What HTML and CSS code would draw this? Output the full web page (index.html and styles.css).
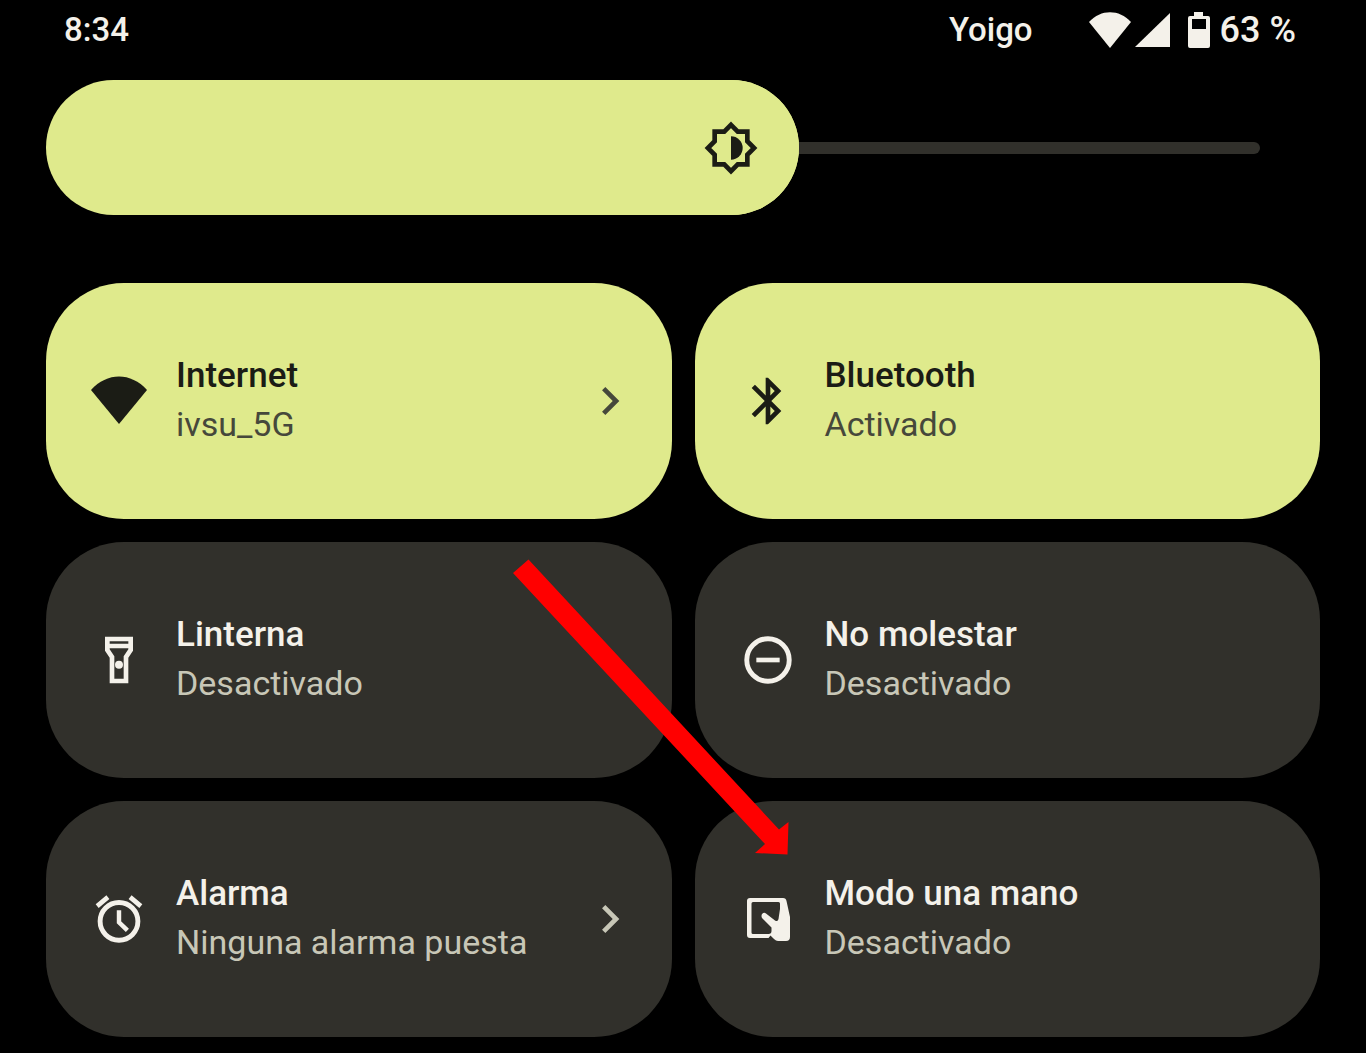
FILE: index.html
```html
<!DOCTYPE html>
<html lang="es">
<head>
<meta charset="UTF-8">
<meta name="viewport" content="width=device-width, initial-scale=1.0">
<title>Ajustes rápidos</title>
<link rel="stylesheet" href="styles.css">
</head>
<body>
<div class="panel">
  <!-- Barra de estado -->
  <header class="status-bar">
    <span class="clock">8:34</span>
    <span class="carrier">Yoigo</span>
    <svg class="status-wifi" viewBox="0 0 42 36"><path d="M0 10C12-3 30-3 42 10L21 36z"/></svg>
    <svg class="status-signal" viewBox="0 0 35 36"><path d="M35 1v34H0z"/></svg>
    <svg class="status-battery" viewBox="0 0 22 36"><path fill-rule="evenodd" d="M6 0h9v4h5q2 0 2 2v28q0 2-2 2H2q-2 0-2-2V6q0-2 2-2h4zM4 7v10h14V7z"/></svg>
    <span class="battery-level">63 %</span>
  </header>

  <!-- Brillo -->
  <div class="brightness">
    <input type="range" class="brightness-input" id="brightness" min="0" max="255" value="146" aria-label="Brillo">
    <div class="brightness-fill" id="brightness-fill" style="--level: 0.5725">
      <svg class="icon" viewBox="0 0 24 24">
        <path fill="none" stroke="currentColor" stroke-width="2" d="M12 2.1L14.9 5H19v4.1l2.9 2.9-2.9 2.9V19h-4.1L12 21.9 9.1 19H5v-4.1L2.1 12 5 9.1V5h4.1z"/>
        <path d="M12 7a5 5 0 0 1 0 10z"/>
      </svg>
    </div>
  </div>

  <!-- Botones -->
  <main class="tiles">
    <button type="button" class="tile active" aria-pressed="true">
      <svg class="icon" viewBox="0 0 56 56"><path d="M0 17C16-1 40-1 56 17L28 51z"/></svg>
      <span class="label">
        <span class="name">Internet</span>
        <span class="state">ivsu_5G</span>
      </span>
      <svg class="icon chevron" viewBox="0 0 24 24"><path d="M10 6L8.590 7.410 13.170 12l-4.580 4.590L10 18l6-6z"/></svg>
    </button>

    <button type="button" class="tile active" aria-pressed="true">
      <svg class="icon" viewBox="0 0 24 24"><path d="M17.710 7.710L12 2h-1v7.590L6.410 5 5 6.410 10.590 12 5 17.590 6.410 19 11 14.410V22h1l5.710-5.710-4.300-4.290 4.300-4.290zM13 5.830l1.880 1.880L13 9.590V5.830zm1.880 10.460L13 18.170v-3.760l1.880 1.880z"/></svg>
      <span class="label">
        <span class="name">Bluetooth</span>
        <span class="state">Activado</span>
      </span>
    </button>

    <button type="button" class="tile" aria-pressed="false">
      <svg class="icon" viewBox="0 0 24 24">
        <path fill-rule="evenodd" d="M18 2H6v6l2 3v11h8V11l2-3zM16 4v1H8V4zM14 10.400V20h-4v-9.600l-2-3V7h8v.400z"/>
        <circle cx="12" cy="14" r="1.700"/>
      </svg>
      <span class="label">
        <span class="name">Linterna</span>
        <span class="state">Desactivado</span>
      </span>
    </button>

    <button type="button" class="tile" aria-pressed="false">
      <svg class="icon" viewBox="0 0 24 24">
        <circle cx="12" cy="12" r="9.100" fill="none" stroke="currentColor" stroke-width="2.100"/>
        <path d="M7 11h10v2H7z"/>
      </svg>
      <span class="label">
        <span class="name">No molestar</span>
        <span class="state">Desactivado</span>
      </span>
    </button>

    <button type="button" class="tile">
      <svg class="icon" viewBox="0 0 24 24">
        <path d="M22 5.720l-4.600-3.860-1.290 1.530 4.600 3.860zM7.880 3.390L6.600 1.860 2 5.710l1.290 1.530z"/>
        <circle cx="12" cy="13" r="8.100" fill="none" stroke="currentColor" stroke-width="2.100"/>
        <path fill="none" stroke="currentColor" stroke-width="1.900" d="M12 8.200v5.200l3.600 3.500"/>
      </svg>
      <span class="label">
        <span class="name">Alarma</span>
        <span class="state">Ninguna alarma puesta</span>
      </span>
      <svg class="icon chevron" viewBox="0 0 24 24"><path d="M10 6L8.590 7.410 13.170 12l-4.580 4.590L10 18l6-6z"/></svg>
    </button>

    <button type="button" class="tile" aria-pressed="false">
      <svg class="icon" viewBox="0 0 56 56"><path fill-rule="evenodd" d="M10 7H43q3 0 3.500 3L50 26V46q0 4-4 4H38q-2 0-4-2L30.500 44.500 28.500 47H10q-3 0-3-3V10q0-3 3-3zM13 11q-1.500 0-1.500 1.500V41.500q0 1.500 1.500 1.500H28.500Q31.500 43 31.500 40V36.500L22 27Q21 25 22 23 24 21 26 22.500L35 29.500Q38 31 38.500 28L40 18V12.500Q40 11 38.500 11z"/></svg>
      <span class="label">
        <span class="name">Modo una mano</span>
        <span class="state">Desactivado</span>
      </span>
    </button>

    <!-- Flecha que señala el modo una mano -->
    <svg class="arrow" viewBox="0 0 276 296"><path d="M15.500 0.500L266 270.500 275.500 263 274.500 295.500 242 294 252 285 0 14z"/></svg>
  </main>
</div>

<script>
  var brightness = document.getElementById('brightness');
  var fill = document.getElementById('brightness-fill');

  brightness.addEventListener('input', function() {
    fill.style.setProperty('--level', brightness.value / brightness.max);
  });
</script>
</body>
</html>
```
FILE: styles.css
```css
body {
  background-color: #000;
  color: #f4f1ea;
  font-family: Roboto, "Noto Sans", sans-serif;
  margin: 0;
}

.panel {
  padding: 0 46px 16px;
}

svg {
  display: block;
  flex-shrink: 0;
  fill: currentColor;
}

.icon {
  width: 56px;
  height: 56px;
}

/* Status bar */
.status-bar {
  display: flex;
  align-items: center;
  height: 59px;
  padding: 0 24px 0 18px;
  font-size: 33px;
  font-weight: 500;
}

.clock {
  margin-right: auto;
}

.carrier {
  margin-right: 56px;
}

.status-wifi {
  width: 42px;
  height: 36px;
  margin-right: 4px;
}

.status-signal {
  width: 35px;
  height: 36px;
  margin-right: 18px;
}

.status-battery {
  width: 22px;
  height: 36px;
  margin-right: 10px;
}

.battery-level {
  font-size: 36px;
}

/* Brightness slider */
.brightness {
  position: relative;
  height: 135px;
  margin: 21px 60px 68px 0;
}

.brightness-input {
  -webkit-appearance: none;
  appearance: none;
  display: block;
  width: 100%;
  height: 135px;
  margin: 0;
  background: none;
  cursor: pointer;
}

.brightness-input::-webkit-slider-runnable-track {
  height: 12px;
  border-radius: 6px;
  background-color: #31302b;
}

.brightness-input::-webkit-slider-thumb {
  -webkit-appearance: none;
  width: 135px;
  height: 135px;
  margin-top: -62px;
  border-radius: 50%;
  background-color: #dfea8c;
}

/* Follows the thumb, see script in index.html */
.brightness-fill {
  position: absolute;
  top: 0;
  left: 0;
  display: flex;
  align-items: center;
  justify-content: flex-end;
  box-sizing: border-box;
  width: calc(135px + (100% - 135px) * var(--level));
  height: 100%;
  padding-right: 40px;
  border-radius: 68px;
  background-color: #dfea8c;
  color: #1b1c15;
  pointer-events: none;
}

/* Tiles */
.tiles {
  position: relative;
  display: grid;
  grid-template-columns: 1fr 1fr;
  gap: 23px;
}

.tile {
  display: flex;
  align-items: center;
  gap: 29px;
  min-height: 236px;
  padding: 0 34px 0 45px;
  border: none;
  border-radius: 78px;
  background-color: #31302b;
  color: #f4f1ea;
  font-family: inherit;
  text-align: left;
  cursor: pointer;
}

.label {
  flex: 1;
  padding-bottom: 2px;
}

.name,
.state {
  display: block;
  line-height: 48px;
}

.name {
  font-size: 35px;
  font-weight: 500;
}

.state {
  font-size: 34px;
  color: #c8c7b7;
}

.chevron {
  color: #c8c7b7;
}

.tile.active {
  background-color: #dfea8c;
  color: #1b1c15;
}

.tile.active .state,
.tile.active .chevron {
  color: #46483b;
}

.arrow {
  position: absolute;
  top: 276px;
  left: calc(50% - 170px);
  width: 276px;
  height: 296px;
  color: #f00;
  pointer-events: none;
}
```
